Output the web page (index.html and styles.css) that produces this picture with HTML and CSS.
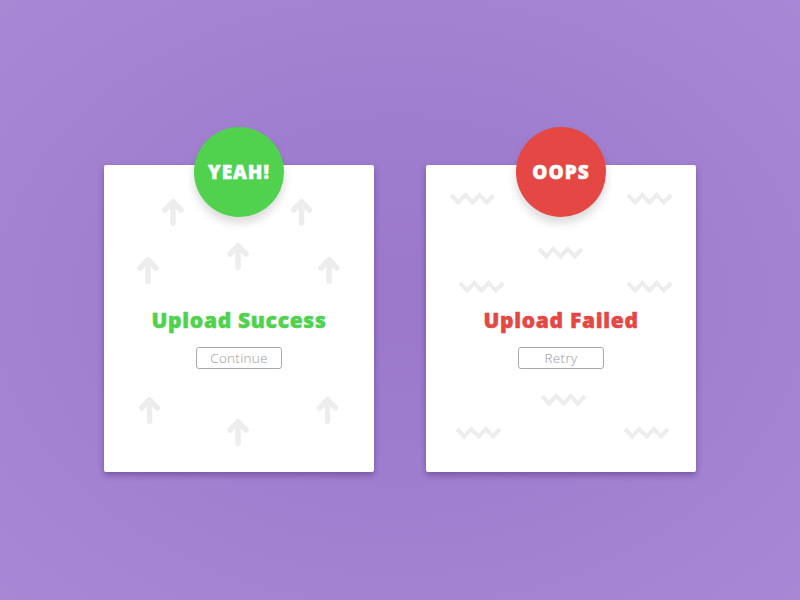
FILE: index.html
```html
<!DOCTYPE html>
<html>
<head>
<meta charset="utf-8">
<title>Upload status</title>
<link rel="stylesheet" href="styles.css">
</head>
<body>
	<div class="stage">
		<!-- success card -->
		<div class="card">
			<svg class="pattern" width="270" height="307" viewBox="0 0 270 307">
				<defs>
					<path id="arrow" d="M0 2.75V24.25M-8 11L0 2.75L8 11" />
				</defs>
				<g class="arrows">
					<use href="#arrow" x="69" y="34" />
					<use href="#arrow" x="197.5" y="34" />
					<use href="#arrow" x="44" y="92" />
					<use href="#arrow" x="134" y="78" />
					<use href="#arrow" x="225" y="92" />
					<use href="#arrow" x="45.5" y="232" />
					<use href="#arrow" x="223.5" y="232" />
					<use href="#arrow" x="134" y="254" />
				</g>
			</svg>
			<div class="badge badge-ok">YEAH!</div>
			<div class="body">
				<h2 class="title title-ok">Upload Success</h2>
				<a href="#" class="btn">Continue</a>
			</div>
		</div>

		<!-- failed card -->
		<div class="card">
			<svg class="pattern" width="270" height="307" viewBox="0 0 270 307">
				<defs>
					<path id="zigzag" d="M2 2L9.2 9.5L16.3 2L23.5 9.5L30.7 2L37.8 9.5L45 2" />
				</defs>
				<g class="zigzags">
					<use href="#zigzag" x="23" y="28" />
					<use href="#zigzag" x="200" y="28" />
					<use href="#zigzag" x="111" y="82" />
					<use href="#zigzag" x="32" y="116" />
					<use href="#zigzag" x="200" y="116" />
					<use href="#zigzag" x="114" y="229" />
					<use href="#zigzag" x="29" y="262" />
					<use href="#zigzag" x="197" y="262" />
				</g>
			</svg>
			<div class="badge badge-fail">OOPS</div>
			<div class="body">
				<h2 class="title title-fail">Upload Failed</h2>
				<a href="#" class="btn">Retry</a>
			</div>
		</div>
	</div>
</body>
</html>
```
FILE: styles.css
```css
html, body {
	margin: 0;
	height: 100%;
}

body {
	background: radial-gradient(ellipse at 50% 50%, #9b78c9 0%, #a07ecf 45%, #a888d5 100%);
	font-family: "Open Sans", sans-serif;
}

.stage {
	display: flex;
	justify-content: center;
	gap: 52px;
	padding-top: 165px;
}

.card {
	position: relative;
	width: 270px;
	height: 307px;
	background: #fff;
	border-radius: 2px;
	box-shadow: 0 3px 6px rgba(60, 20, 90, 0.4);
}

.pattern {
	position: absolute;
	left: 0;
	top: 0;
}

.arrows use,
.zigzags use {
	fill: none;
	stroke: #ededed;
}

.arrows use {
	stroke-width: 5.5;
	stroke-linecap: round;
	stroke-linejoin: round;
}

.zigzags use {
	stroke-width: 4;
	stroke-linejoin: miter;
}

.badge {
	position: absolute;
	top: -38px;
	left: 90px;
	width: 90px;
	height: 90px;
	border-radius: 50%;
	display: flex;
	align-items: center;
	justify-content: center;
	color: #fff;
	font-size: 19px;
	font-weight: 800;
	letter-spacing: 1px;
	-webkit-text-stroke: 0.5px #fff;
	box-shadow: 0 6px 10px rgba(0, 0, 0, 0.15);
}

.badge-ok {
	background: #50d24f;
}

.badge-fail {
	background: #e54744;
}

.body {
	position: relative;
	display: flex;
	flex-direction: column;
	align-items: center;
	padding-top: 142px;
}

.title {
	margin: 0 0 14px;
	font-size: 21px;
	line-height: 26px;
	font-weight: 800;
	letter-spacing: 0.7px;
	-webkit-text-stroke: 0.5px currentColor;
}

.title-ok {
	color: #50d24f;
}

.title-fail {
	color: #e54744;
}

.btn {
	box-sizing: border-box;
	width: 86px;
	height: 22px;
	border: 1px solid #aaa;
	border-radius: 3px;
	color: #999;
	font-size: 13.5px;
	font-weight: 300;
	letter-spacing: 0.3px;
	line-height: 20px;
	text-align: center;
	text-decoration: none;
}
```
